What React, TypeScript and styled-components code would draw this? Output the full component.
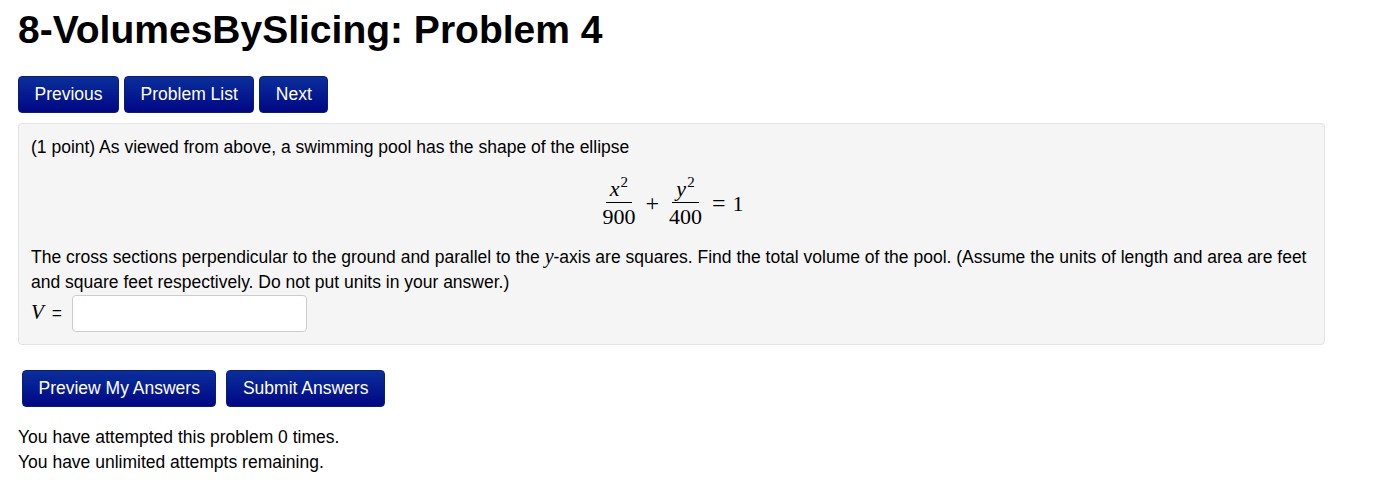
import React from 'react';
import styled, { createGlobalStyle } from 'styled-components';

const GlobalStyle = createGlobalStyle`
  body {
    margin: 0;
    background: #fff;
    font-family: "Liberation Sans", Arial, sans-serif;
    color: #000;
  }
`;

const Page = styled.div`
  padding: 8px 18px 0 18px;
  width: 1307px;
`;

const Title = styled.h1`
  margin: 0;
  font-size: 39px;
  font-weight: bold;
  line-height: 44px;
`;

const NavBar = styled.div`
  display: flex;
  gap: 5px;
  margin-top: 24px;
`;

const NavButton = styled.button`
  font-family: "Liberation Sans", Arial, sans-serif;
  font-size: 17.5px;
  color: #fff;
  height: 37px;
  padding: 0 15.5px;
  border: 1px solid #0b1e70;
  border-radius: 4px;
  background: linear-gradient(to bottom, #0a2f9c 0%, #000784 100%);
  cursor: pointer;
`;

const ProblemPanel = styled.div`
  margin-top: 10px;
  background: #f5f5f5;
  border: 1px solid #e3e3e3;
  border-radius: 4px;
  padding: 11px 12px 12px 12px;
  font-size: 17.5px;
  line-height: 25px;
`;

const Para = styled.p`
  margin: 0;
`;

const MathBlock = styled.div`
  display: flex;
  justify-content: center;
  align-items: center;
  margin: 18px 0 17px;
  font-family: "Liberation Serif", "DejaVu Serif", serif;
  font-size: 22px;
`;

const Frac = styled.span`
  display: inline-flex;
  flex-direction: column;
  align-items: center;
  margin: 0 3px;
`;

const Num = styled.span`
  padding: 0 4px 2px;
  border-bottom: 1.5px solid #000;
  line-height: 22px;
`;

const Den = styled.span`
  padding-top: 3px;
  line-height: 22px;
`;

const Var = styled.i<{ $size?: number }>`
  font-family: "Liberation Serif", serif;
  font-size: ${(p) => p.$size ?? 22}px;
  line-height: 1;
`;

const Sup = styled.sup`
  font-size: 15px;
  font-style: normal;
  vertical-align: 9px;
  line-height: 0;
  margin-left: 1px;
`;

const Op = styled.span`
  margin: 0 7px;
  font-size: 24px;
`;

const AnswerRow = styled.div`
  display: flex;
  align-items: center;
  gap: 10px;
`;

const Label = styled.span`
  white-space: pre;
  word-spacing: 3px;
`;

const AnswerInput = styled.input`
  width: 235px;
  height: 37px;
  box-sizing: border-box;
  border: 1px solid #ccc;
  border-radius: 4px;
  background: #fff;
`;

const SubmitBar = styled.div`
  display: flex;
  gap: 10px;
  margin: 25px 0 0 4px;
`;

const Info = styled.div`
  margin-top: 18px;
  font-size: 17.5px;
  line-height: 25px;
`;

export default function App() {
  return (
    <>
      <GlobalStyle />
      <Page>
        <Title>8-VolumesBySlicing: Problem 4</Title>
        <NavBar>
          <NavButton>Previous</NavButton>
          <NavButton>Problem List</NavButton>
          <NavButton>Next</NavButton>
        </NavBar>
        <ProblemPanel>
          <Para>(1 point) As viewed from above, a swimming pool has the shape of the ellipse</Para>
          <MathBlock>
            <Frac>
              <Num><Var>x</Var><Sup>2</Sup></Num>
              <Den>900</Den>
            </Frac>
            <Op>+</Op>
            <Frac>
              <Num><Var>y</Var><Sup>2</Sup></Num>
              <Den>400</Den>
            </Frac>
            <Op>=</Op>
            <span>1</span>
          </MathBlock>
          <Para>
            The cross sections perpendicular to the ground and parallel to the <Var $size={20}>y</Var>-axis are squares. Find the total volume of the pool. (Assume the units of length and area are feet and square feet respectively. Do not put units in your answer.)
          </Para>
          <AnswerRow>
            <Label><Var $size={21}>V</Var> =</Label>
            <AnswerInput type="text" />
          </AnswerRow>
        </ProblemPanel>
        <SubmitBar>
          <NavButton>Preview My Answers</NavButton>
          <NavButton>Submit Answers</NavButton>
        </SubmitBar>
        <Info>
          You have attempted this problem 0 times.
          <br />
          You have unlimited attempts remaining.
        </Info>
      </Page>
    </>
  );
}
